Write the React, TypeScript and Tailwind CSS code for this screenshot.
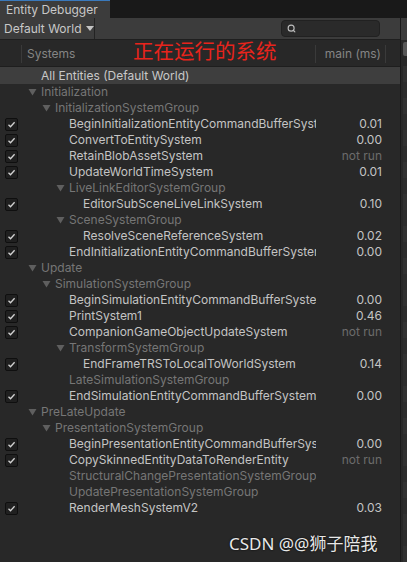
import { Search } from "lucide-react";

type Row = {
  name: string;
  depth: number;
  group?: boolean;
  open?: boolean;
  value?: string;
};

const rows: Row[] = [
  { name: "Initialization", depth: 0, group: true, open: true },
  { name: "InitializationSystemGroup", depth: 1, group: true, open: true },
  { name: "BeginInitializationEntityCommandBufferSystem", depth: 2, value: "0.01" },
  { name: "ConvertToEntitySystem", depth: 2, value: "0.00" },
  { name: "RetainBlobAssetSystem", depth: 2, value: "not run" },
  { name: "UpdateWorldTimeSystem", depth: 2, value: "0.01" },
  { name: "LiveLinkEditorSystemGroup", depth: 2, group: true, open: true },
  { name: "EditorSubSceneLiveLinkSystem", depth: 3, value: "0.10" },
  { name: "SceneSystemGroup", depth: 2, group: true, open: true },
  { name: "ResolveSceneReferenceSystem", depth: 3, value: "0.02" },
  { name: "EndInitializationEntityCommandBufferSystem", depth: 2, value: "0.00" },
  { name: "Update", depth: 0, group: true, open: true },
  { name: "SimulationSystemGroup", depth: 1, group: true, open: true },
  { name: "BeginSimulationEntityCommandBufferSystem", depth: 2, value: "0.00" },
  { name: "PrintSystem1", depth: 2, value: "0.46" },
  { name: "CompanionGameObjectUpdateSystem", depth: 2, value: "not run" },
  { name: "TransformSystemGroup", depth: 2, group: true, open: true },
  { name: "EndFrameTRSToLocalToWorldSystem", depth: 3, value: "0.14" },
  { name: "LateSimulationSystemGroup", depth: 2, group: true },
  { name: "EndSimulationEntityCommandBufferSystem", depth: 2, value: "0.00" },
  { name: "PreLateUpdate", depth: 0, group: true, open: true },
  { name: "PresentationSystemGroup", depth: 1, group: true, open: true },
  { name: "BeginPresentationEntityCommandBufferSystem", depth: 2, value: "0.00" },
  { name: "CopySkinnedEntityDataToRenderEntity", depth: 2, value: "not run" },
  { name: "StructuralChangePresentationSystemGroup", depth: 2, group: true },
  { name: "UpdatePresentationSystemGroup", depth: 2, group: true },
  { name: "RenderMeshSystemV2", depth: 2, value: "0.03" },
];

function CheckBox() {
  return (
    <div className="flex h-[13px] w-[13px] items-center justify-center rounded-[2px] border border-[#0f0f0f] bg-[#202020]">
      <svg width="9" height="9" viewBox="0 0 9 9">
        <path d="M1.5 4.8 L3.5 6.8 L7.6 2.2" fill="none" stroke="#d2d2d2" strokeWidth="1.3" />
      </svg>
    </div>
  );
}

function Arrow() {
  return (
    <svg width="9" height="8" viewBox="0 0 9 8" className="shrink-0">
      <path d="M0.5 1 L8.5 1 L4.5 7.5 Z" fill="#5f5f5f" />
    </svg>
  );
}

function SystemRow({ row }: { row: Row }) {
  const textX = 19 + row.depth * 14;
  return (
    <div className="flex h-4 items-center">
      <div className="flex w-[22px] shrink-0 justify-center pl-[1px]">{!row.group && <CheckBox />}</div>
      <div className="relative h-4 w-[294px] shrink-0 overflow-hidden whitespace-nowrap">
        {row.open && (
          <div className="absolute top-[4px]" style={{ left: textX - 13 }}>
            <Arrow />
          </div>
        )}
        <span
          className={`absolute top-0 leading-4 ${row.group ? "text-[#767676]" : "text-[#c4c4c4]"}`}
          style={{ left: textX }}
        >
          {row.name}
        </span>
      </div>
      <div
        className={`w-[66px] shrink-0 text-right leading-4 ${row.value === "not run" ? "text-[#6c6c6c]" : "text-[#c4c4c4]"}`}
      >
        {row.value}
      </div>
    </div>
  );
}

export default function App() {
  return (
    <div
      className="relative flex h-[562px] w-[407px] flex-col overflow-hidden bg-[#282828] text-[12px] text-[#c4c4c4]"
      style={{ fontFamily: "Inter, 'Noto Sans', sans-serif" }}
    >
      <div className="flex h-[18px] shrink-0 bg-[#191919]">
        <div className="flex w-[110px] items-center whitespace-nowrap border-t border-[#3a79bb] bg-[#3c3c3c] pl-[6px] text-[12px] text-[#c8c8c8]">
          Entity Debugger
        </div>
      </div>

      <div className="flex flex-1">
        <div className="flex w-[400px] shrink-0 flex-col">
          <div className="flex h-[22px] items-center border-b border-[#1f1f1f] bg-[#3c3c3c]">
            <div className="flex h-full w-[95px] shrink-0 items-center gap-[4px] whitespace-nowrap border-r border-[#232323] pl-[4px] text-[12px] text-[#c8c8c8]">
              Default World
              <svg width="8" height="6" viewBox="0 0 8 6">
                <path d="M0 0 L8 0 L4 5 Z" fill="#c4c4c4" />
              </svg>
            </div>
            <div className="ml-auto mr-[20px] flex h-[17px] w-[99px] items-center rounded-[4px] border border-[#212121] bg-[#2a2a2a] pl-[5px]">
              <Search size={9} strokeWidth={3} color="#bdbdbd" />
            </div>
          </div>

          <div className="flex h-[27px] items-center border-b border-[#1e1e1e] pt-[1px]">
            <div className="h-[18px] w-[22px] shrink-0 border-r border-[#3a3a3a]" />
            <div className="relative w-[294px] shrink-0 border-r border-[#3a3a3a] pl-[5px] text-[#858585]">
              Systems
              <span
                className="absolute left-[111px] top-[-9px] text-[20.5px] leading-[28px] text-[#e8241c]"
                style={{ fontFamily: "'Noto Sans CJK SC', sans-serif" }}
              >
                正在运行的系统
              </span>
            </div>
            <div className="w-[70px] shrink-0 border-r border-[#3a3a3a] pr-[4px] text-right text-[#858585]">
              main (ms)
            </div>
          </div>

          <div className="flex h-[17px] items-center bg-[#3e3e3e] pl-[41px] pt-[1px] text-[#c8c8c8]">
            All Entities (Default World)
          </div>

          {rows.map((row) => (
            <SystemRow key={row.name} row={row} />
          ))}
        </div>

        <div className="flex flex-1 flex-col border-l border-[#1a1a1a]">
          <div className="h-[22px] bg-[#3c3c3c]" />
          <div className="mt-[2px] ml-[2px] h-[14px] rounded-l-[2px] bg-[#585858]" />
          <div className="h-[10px]" />
          <div className="ml-[2px] flex-1 bg-[repeating-linear-gradient(#313131_0px,#313131_16px,#2c2c2c_16px,#2c2c2c_32px)]" />
        </div>
      </div>

      <div
        className="absolute left-[229px] top-[531px] text-[17px] text-[#e8e8e8] [text-shadow:0_0_2px_#000]"
        style={{ fontFamily: "'Noto Sans', 'Noto Sans CJK SC', sans-serif" }}
      >
        CSDN @@狮子陪我
      </div>
    </div>
  );
}
